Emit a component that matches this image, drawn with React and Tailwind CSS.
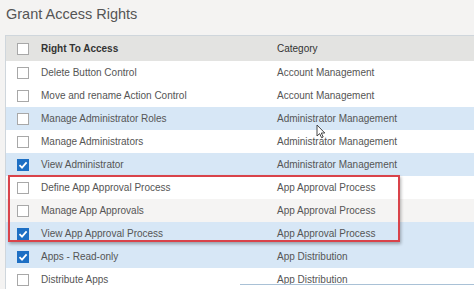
import React from 'react'

const rows = [
  { name: 'Delete Button Control', cat: 'Account Management', bg: 'bg-white', checked: false },
  { name: 'Move and rename Action Control', cat: 'Account Management', bg: 'bg-white', checked: false },
  { name: 'Manage Administrator Roles', cat: 'Administrator Management', bg: 'bg-[#d7e7f6]', checked: false },
  { name: 'Manage Administrators', cat: 'Administrator Management', bg: 'bg-white', checked: false },
  { name: 'View Administrator', cat: 'Administrator Management', bg: 'bg-[#d7e7f6]', checked: true },
  { name: 'Define App Approval Process', cat: 'App Approval Process', bg: 'bg-white', checked: false },
  { name: 'Manage App Approvals', cat: 'App Approval Process', bg: 'bg-[#f5f4f3]', checked: false },
  { name: 'View App Approval Process', cat: 'App Approval Process', bg: 'bg-[#d7e7f6]', checked: true },
  { name: 'Apps - Read-only', cat: 'App Distribution', bg: 'bg-[#d7e7f6]', checked: true },
  { name: 'Distribute Apps', cat: 'App Distribution', bg: 'bg-white', checked: false },
]

const Box = ({ checked }) => (
  checked ? (
    <div className='w-[12px] h-[12px] bg-[#1d6fc4] flex items-center justify-center'>
      <svg width="10" height="10" viewBox="0 0 10 10">
        <path d="M1.5 5.2 L4 7.6 L8.6 2.4" stroke="white" strokeWidth="1.8" fill="none" />
      </svg>
    </div>
  ) : (
    <div className='w-[12px] h-[12px] border border-[#a8a8a8] bg-white' />
  )
)

const App = () => {
  return (
    <div className='relative w-[474px] h-[289px] overflow-hidden bg-[#f4f3f2] font-["Liberation_Sans",Arial,sans-serif]'>
      <div className='h-[35px] pl-[6px] pt-[4px] text-[14.5px] text-[#555]'>Grant Access Rights</div>
      <div className='ml-[5px] border-l border-t border-[#cfd6dc]'>
        <div className='flex items-center h-[25px] bg-[#e3e3e1] text-[10px] text-[#333]'>
          <div className='w-[35px] pl-[11px]'><Box checked={false} /></div>
          <div className='w-[236px] font-bold'>Right To Access</div>
          <div>Category</div>
        </div>
        {rows.map((r) => (
          <div key={r.name} className={`flex items-center h-[23px] ${r.bg} text-[10px] text-[#555]`}>
            <div className='w-[35px] pl-[11px]'><Box checked={r.checked} /></div>
            <div className='w-[236px]'>{r.name}</div>
            <div>{r.cat}</div>
          </div>
        ))}
      </div>
      <div className='absolute left-[8px] top-[175px] w-[392px] h-[67px] border-2 border-[#d9434a] shadow-[1px_2px_3px_rgba(0,0,0,0.3)]' />
      <div className='absolute left-[240px] top-[284px] w-[234px] h-px bg-[#a9c1d6]' />
      <svg className='absolute left-[316px] top-[124px]' width="10" height="15" viewBox="0 0 10 15">
        <path d="M1 1 L1 12 L3.6 9.6 L5.6 13.8 L7.2 13 L5.3 9 L8.8 9 Z" fill="white" stroke="#333" strokeWidth="0.9" />
      </svg>
    </div>
  )
}

export default App
